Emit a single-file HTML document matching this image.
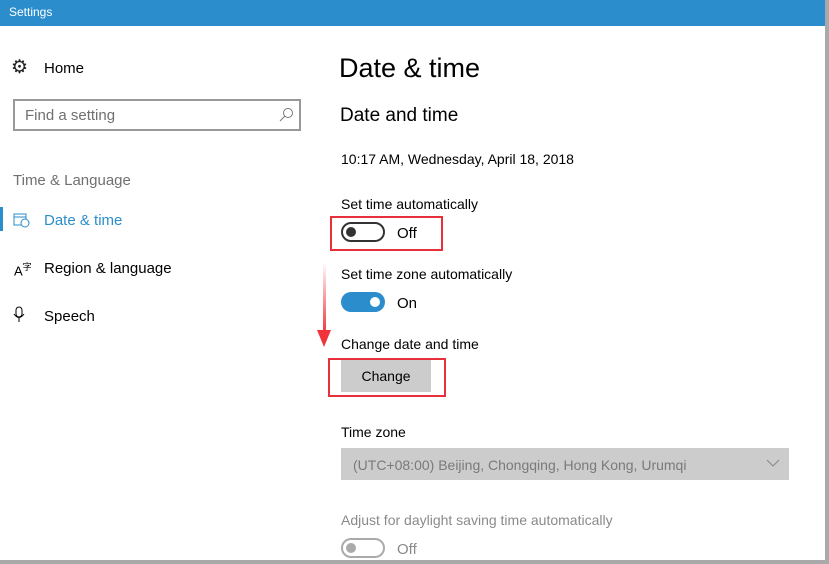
<!DOCTYPE html><html><head><style>
*{margin:0;padding:0;box-sizing:border-box}
body{width:829px;height:564px;overflow:hidden;background:#fff;font-family:"Liberation Sans",sans-serif;position:relative;color:#000}
.a{position:absolute;white-space:nowrap}
</style></head><body>
<div class="a" style="left:0;top:0;width:825px;height:26px;background:#2b8dcc;color:#fff;font-size:12px;padding:5px 0 0 9px">Settings</div>
<div class="a" style="left:825px;top:0;width:4px;height:564px;background:#a9a9a9"></div>
<div class="a" style="left:0;top:560px;width:829px;height:4px;background:#a9a9a9"></div>
<div class="a" style="left:11px;top:56px;font-size:19px;color:#222">⚙</div>
<div class="a" style="left:44px;top:60px;font-size:15px">Home</div>
<div class="a" style="left:13px;top:99px;width:288px;height:32px;border:2px solid #999"></div>
<div class="a" style="left:25px;top:107px;font-size:15px;color:#707070">Find a setting</div>
<svg class="a" style="left:278px;top:107px" width="16" height="16"><circle cx="10" cy="6" r="4.5" fill="none" stroke="#777"/><line x1="7" y1="9" x2="2" y2="14" stroke="#777"/></svg>
<div class="a" style="left:13px;top:172px;font-size:15px;color:#707070">Time &amp; Language</div>
<div class="a" style="left:0;top:207px;width:3px;height:24px;background:#2b8dcc"></div>
<svg class="a" style="left:13px;top:211px" width="17" height="17"><rect x="1" y="3" width="12" height="11" fill="none" stroke="#2b8dcc"/><line x1="1" y1="6" x2="13" y2="6" stroke="#2b8dcc"/><circle cx="12" cy="12" r="4" fill="#fff" stroke="#2b8dcc"/></svg>
<div class="a" style="left:44px;top:212px;font-size:15px;color:#2b8dcc">Date &amp; time</div>
<div class="a" style="left:14px;top:260px;font-size:13px">A<sup style="font-size:9px">字</sup></div>
<div class="a" style="left:44px;top:260px;font-size:15px">Region &amp; language</div>
<svg class="a" style="left:13px;top:306px" width="14" height="18"><rect x="3" y="1" width="6" height="10" rx="3" fill="none" stroke="#000"/><path d="M1 8 Q6 15 11 8 M6 12 V16" fill="none" stroke="#000"/></svg>
<div class="a" style="left:44px;top:308px;font-size:15px">Speech</div>
<div class="a" style="left:339px;top:53px;font-size:27px">Date &amp; time</div>
<div class="a" style="left:340px;top:105px;font-size:19px">Date and time</div>
<div class="a" style="left:341px;top:151px;font-size:14px">10:17 AM, Wednesday, April 18, 2018</div>
<div class="a" style="left:341px;top:196px;font-size:14px">Set time automatically</div>
<div class="a" style="left:330px;top:216px;width:113px;height:35px;border:2px solid #e8303a"></div>
<div class="a" style="left:341px;top:222px;width:44px;height:20px;border:2px solid #333;border-radius:10px"></div>
<div class="a" style="left:346px;top:227px;width:10px;height:10px;border-radius:5px;background:#333"></div>
<div class="a" style="left:397px;top:225px;font-size:15px">Off</div>
<div class="a" style="left:341px;top:266px;font-size:14px">Set time zone automatically</div>
<div class="a" style="left:341px;top:292px;width:44px;height:20px;background:#2b8dcc;border-radius:10px"></div>
<div class="a" style="left:370px;top:297px;width:10px;height:10px;border-radius:5px;background:#fff"></div>
<div class="a" style="left:397px;top:295px;font-size:15px">On</div>
<div class="a" style="left:323px;top:262px;width:3px;height:72px;background:linear-gradient(#fff,#f0333a)"></div>
<div class="a" style="left:317px;top:330px;width:0;height:0;border-left:7px solid transparent;border-right:7px solid transparent;border-top:17px solid #f0333a"></div>
<div class="a" style="left:341px;top:336px;font-size:14px">Change date and time</div>
<div class="a" style="left:328px;top:358px;width:118px;height:39px;border:2px solid #e8303a"></div>
<div class="a" style="left:341px;top:360px;width:90px;height:32px;background:#ccc;font-size:14px;text-align:center;line-height:33px">Change</div>
<div class="a" style="left:341px;top:424px;font-size:14px">Time zone</div>
<div class="a" style="left:341px;top:448px;width:448px;height:32px;background:#ccc;color:#7a7a7a;font-size:14px;padding:9px 0 0 12px">(UTC+08:00) Beijing, Chongqing, Hong Kong, Urumqi</div>
<svg class="a" style="left:766px;top:459px" width="14" height="9"><path d="M1 1 L7 7 L13 1" fill="none" stroke="#888"/></svg>
<div class="a" style="left:341px;top:512px;font-size:14px;color:#8a8a8a">Adjust for daylight saving time automatically</div>
<div class="a" style="left:341px;top:538px;width:44px;height:20px;border:2px solid #aaa;border-radius:10px"></div>
<div class="a" style="left:346px;top:543px;width:10px;height:10px;border-radius:5px;background:#aaa"></div>
<div class="a" style="left:397px;top:541px;font-size:15px;color:#8a8a8a">Off</div>
</body></html>
